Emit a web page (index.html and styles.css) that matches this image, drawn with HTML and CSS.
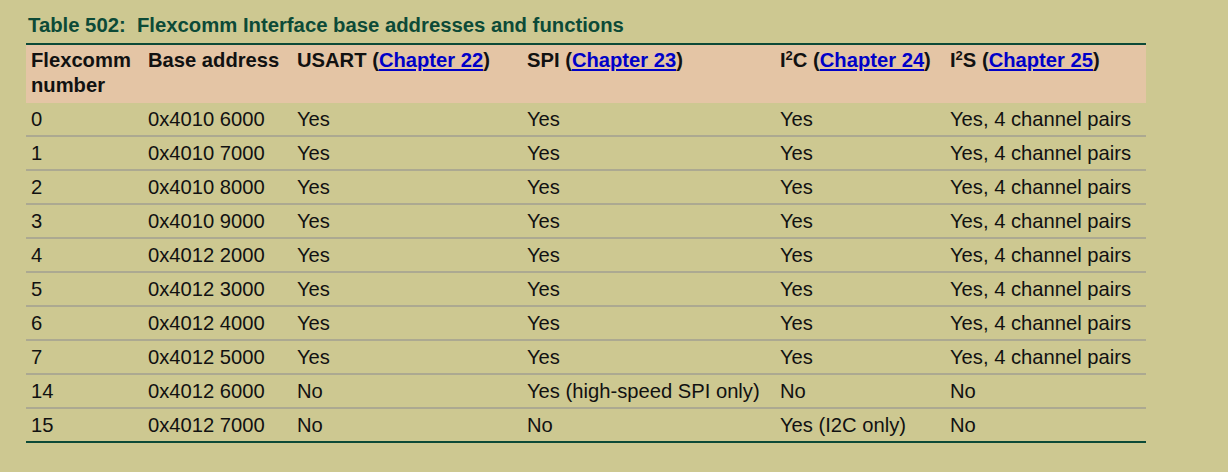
FILE: index.html
```html
<!DOCTYPE html>
<html>
<head>
<meta charset="utf-8">
<link rel="stylesheet" href="styles.css">
</head>
<body>
<div class="page">
  <div class="caption">Table 502:&nbsp; Flexcomm Interface base addresses and functions</div>
  <table class="tbl">
    <colgroup>
      <col class="c1"><col class="c2"><col class="c3"><col class="c4"><col class="c5"><col class="c6">
    </colgroup>
    <thead>
      <tr>
        <th>Flexcomm number</th>
        <th>Base address</th>
        <th>USART (<a href="#">Chapter 22</a>)</th>
        <th>SPI (<a href="#">Chapter 23</a>)</th>
        <th>I<sup>2</sup>C (<a href="#">Chapter 24</a>)</th>
        <th>I<sup>2</sup>S (<a href="#">Chapter 25</a>)</th>
      </tr>
    </thead>
    <tbody>
      <tr><td>0</td><td>0x4010 6000</td><td>Yes</td><td>Yes</td><td>Yes</td><td>Yes, 4 channel pairs</td></tr>
      <tr><td>1</td><td>0x4010 7000</td><td>Yes</td><td>Yes</td><td>Yes</td><td>Yes, 4 channel pairs</td></tr>
      <tr><td>2</td><td>0x4010 8000</td><td>Yes</td><td>Yes</td><td>Yes</td><td>Yes, 4 channel pairs</td></tr>
      <tr><td>3</td><td>0x4010 9000</td><td>Yes</td><td>Yes</td><td>Yes</td><td>Yes, 4 channel pairs</td></tr>
      <tr><td>4</td><td>0x4012 2000</td><td>Yes</td><td>Yes</td><td>Yes</td><td>Yes, 4 channel pairs</td></tr>
      <tr><td>5</td><td>0x4012 3000</td><td>Yes</td><td>Yes</td><td>Yes</td><td>Yes, 4 channel pairs</td></tr>
      <tr><td>6</td><td>0x4012 4000</td><td>Yes</td><td>Yes</td><td>Yes</td><td>Yes, 4 channel pairs</td></tr>
      <tr><td>7</td><td>0x4012 5000</td><td>Yes</td><td>Yes</td><td>Yes</td><td>Yes, 4 channel pairs</td></tr>
      <tr><td>14</td><td>0x4012 6000</td><td>No</td><td>Yes (high-speed SPI only)</td><td>No</td><td>No</td></tr>
      <tr class="last"><td>15</td><td>0x4012 7000</td><td>No</td><td>No</td><td>Yes (I2C only)</td><td>No</td></tr>
    </tbody>
  </table>
</div>
</body>
</html>
```
FILE: styles.css
```css
html, body {
  margin: 0;
  padding: 0;
  background: #cdc891;
}
body {
  font-family: "Liberation Sans", Arial, sans-serif;
  color: #111;
}
.page {
  padding: 13px 0 0 26px;
}
.caption {
  font-weight: bold;
  font-size: 20.3px;
  color: #0c4a37;
  padding-left: 2px;
  line-height: 24px;
  height: 30px;
}
.tbl {
  border-collapse: collapse;
  table-layout: fixed;
  width: 1120px;
  font-size: 20.2px;
  border-top: 2px solid #0c4a37;
}
.c1 { width: 117px; }
.c2 { width: 149px; }
.c3 { width: 230px; }
.c4 { width: 253px; }
.c5 { width: 170px; }
.c6 { width: 201px; }
.tbl th {
  background: #e4c5a5;
  text-align: left;
  vertical-align: top;
  font-weight: bold;
  line-height: 25px;
  padding: 3px 5px 5px 5px;
  height: 50px;
  color: #111;
}
.tbl th sup {
  font-size: 13px;
  line-height: 0;
  vertical-align: 7px;
}
.tbl a {
  color: #0000c8;
  text-decoration: underline;
}
.tbl td {
  padding: 0 5px;
  height: 32px;
  line-height: 22px;
  border-bottom: 2px solid #aca991;
  white-space: nowrap;
}
.tbl tr.last td {
  border-bottom: 2px solid #0c4a37;
}
```
